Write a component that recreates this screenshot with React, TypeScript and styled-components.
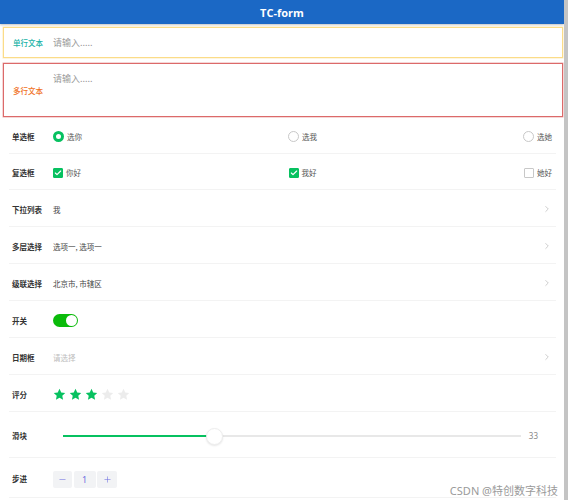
import React from 'react';
import styled, { createGlobalStyle } from 'styled-components';
import { ChevronRight, Check, Minus, Plus } from 'lucide-react';

const GlobalStyle = createGlobalStyle`
  html, body {
    margin: 0;
    padding: 0;
    background: #fff;
  }
  body {
    font-family: "Noto Sans", "Noto Sans CJK SC", sans-serif;
  }
`;

const GREEN = '#07c160';

// Page frame: content column plus the browser scrollbar strip on the right.
const Page = styled.div`
  position: relative;
  width: 564px;
  height: 500px;
  border-right: 4px solid #c4c4c4;
  overflow: hidden;
  background: #fff;
`;

const Header = styled.header`
  height: 24px;
  display: flex;
  align-items: center;
  justify-content: center;
  background: #1b68c5;
  box-shadow: 0 1px 2px rgba(0, 0, 0, 0.25);
  color: #fff;
  font-family: "Open Sans", "Noto Sans", sans-serif;
  font-weight: 700;
  font-size: 11px;
`;

const Fields = styled.div`
  display: flex;
  flex-direction: column;
  gap: 5px;
  padding: 3px 1px 0 3px;
`;

const FieldBox = styled.div<{ $border: string; $tall?: boolean }>`
  display: flex;
  align-items: ${({ $tall }) => ($tall ? 'stretch' : 'center')};
  height: ${({ $tall }) => ($tall ? '54px' : '31px')};
  box-sizing: border-box;
  border: 1px solid ${({ $border }) => $border};
  box-shadow: 0 0 0 0.5px ${({ $border }) => $border}88;
`;

const FieldLabel = styled.span<{ $color: string }>`
  width: 40px;
  padding-left: 9px;
  align-self: center;
  color: ${({ $color }) => $color};
  font-family: "Noto Sans CJK SC", sans-serif;
  font-size: 7.5px;
  font-weight: 500;
`;

const Placeholder = styled.span<{ $tall?: boolean }>`
  padding-top: ${({ $tall }) => ($tall ? '8px' : '0')};
  color: #9a9a9a;
  font-family: "Noto Sans CJK SC", sans-serif;
  font-size: 9px;
`;

const Rows = styled.div`
  display: flex;
  flex-direction: column;
  margin: 0 8px 0 9px;
`;

const Row = styled.div<{ $h: number }>`
  display: flex;
  align-items: center;
  height: ${({ $h }) => $h}px;
  box-sizing: border-box;
  padding-top: 2px;
  border-bottom: 1px solid #f3f3f3;
`;

const RowLabel = styled.span`
  width: 41px;
  padding-left: 3px;
  flex: 0 0 auto;
  color: #333;
  font-family: "Noto Sans CJK SC", sans-serif;
  font-size: 7.5px;
  font-weight: 600;
`;

const RowBody = styled.div`
  flex: 1;
  display: flex;
  align-items: center;
  justify-content: space-between;
  padding-right: 4px;
  min-width: 0;
`;

const Value = styled.span<{ $muted?: boolean }>`
  color: ${({ $muted }) => ($muted ? '#bdbdbd' : '#444')};
  font-family: "Noto Sans CJK SC", sans-serif;
  font-size: 7.5px;
`;

const Option = styled.span`
  display: flex;
  align-items: center;
  gap: 3px;
  color: #555;
  font-family: "Noto Sans CJK SC", sans-serif;
  font-size: 7.5px;
`;

const RadioDot = styled.span<{ $on?: boolean }>`
  width: 11px;
  height: 11px;
  box-sizing: border-box;
  border-radius: 50%;
  border: ${({ $on }) => ($on ? `3px solid ${GREEN}` : '1px solid #c8c8c8')};
  background: #fff;
`;

const CheckBox = styled.span<{ $on?: boolean }>`
  width: 10px;
  height: 10px;
  box-sizing: border-box;
  display: flex;
  align-items: center;
  justify-content: center;
  border: 1px solid ${({ $on }) => ($on ? GREEN : '#c8c8c8')};
  background: ${({ $on }) => ($on ? GREEN : '#fff')};
  border-radius: 1px;
`;

const Arrow = styled(ChevronRight)`
  color: #c4c4c4;
`;

const Toggle = styled.span<{ $on?: boolean }>`
  position: relative;
  width: 25px;
  height: 13px;
  border-radius: 7px;
  background: ${({ $on }) => ($on ? '#0abb0a' : '#e5e5e5')};
`;

const Knob = styled.span`
  position: absolute;
  top: 1px;
  right: 1px;
  width: 11px;
  height: 11px;
  border-radius: 50%;
  background: #fff;
`;

const Stars = styled.div`
  display: flex;
  gap: 3px;
`;

const SliderWrap = styled.div`
  flex: 1;
  display: flex;
  align-items: center;
  gap: 8px;
  padding-left: 10px;
  padding-right: 18px;
`;

const Track = styled.div`
  position: relative;
  flex: 1;
  height: 2px;
  background: #e8e8e8;
`;

const TrackFill = styled.div`
  position: absolute;
  left: 0;
  top: 0;
  height: 2px;
  background: ${GREEN};
`;

const Thumb = styled.span`
  position: absolute;
  top: 1px;
  width: 15px;
  height: 15px;
  margin: -8px 0 0 -8px;
  border-radius: 50%;
  background: #fff;
  border: 1px solid #eee;
  box-shadow: 0 1px 2px rgba(0, 0, 0, 0.1);
`;

const SliderValue = styled.span`
  color: #888;
  font-family: "Noto Sans", sans-serif;
  font-size: 8px;
`;

const Stepper = styled.div`
  display: flex;
  gap: 1.5px;
  height: 17px;
  margin-top: 2px;
`;

const StepCell = styled.span<{ $w: number }>`
  width: ${({ $w }) => $w}px;
  display: flex;
  align-items: center;
  justify-content: center;
  background: #f2f3f5;
  border-radius: 2px;
  color: #6f6fe0;
  font-family: "Noto Sans", sans-serif;
  font-size: 9px;
`;

const Watermark = styled.span`
  position: absolute;
  right: 6px;
  bottom: 2px;
  color: #9a9a9a;
  font-family: "Noto Sans", "Noto Sans CJK SC", sans-serif;
  font-size: 11px;
  text-shadow: 0 0 2px #fff;
`;

function StarIcon({ on }: { on: boolean }) {
  return (
    <svg width="13" height="13" viewBox="0 0 24 24">
      <path
        d="M12 1.5l3.2 6.9 7.4.8-5.5 5.1 1.5 7.4L12 17.9l-6.6 3.8 1.5-7.4-5.5-5.1 7.4-.8z"
        fill={on ? GREEN : '#ececec'}
      />
    </svg>
  );
}

function Radio({ on, label }: { on?: boolean; label: string }) {
  return (
    <Option>
      <RadioDot $on={on} />
      {label}
    </Option>
  );
}

function Checkbox({ on, label }: { on?: boolean; label: string }) {
  return (
    <Option>
      <CheckBox $on={on}>{on && <Check size={8} color="#fff" strokeWidth={3.5} />}</CheckBox>
      {label}
    </Option>
  );
}

export default function App() {
  const rating = 3;
  const slider = 33;
  return (
    <>
      <GlobalStyle />
      <Page>
        <Header>TC-form</Header>
        <Fields>
          <FieldBox $border="#fbdc88">
            <FieldLabel $color="#1bb3a6">单行文本</FieldLabel>
            <Placeholder>请输入.....</Placeholder>
          </FieldBox>
          <FieldBox $border="#dc6a6a" $tall>
            <FieldLabel $color="#f0731f">多行文本</FieldLabel>
            <Placeholder $tall>请输入.....</Placeholder>
          </FieldBox>
        </Fields>
        <Rows>
          <Row $h={37}>
            <RowLabel>单选框</RowLabel>
            <RowBody>
              <Radio on label="选你" />
              <Radio label="选我" />
              <Radio label="选她" />
            </RowBody>
          </Row>
          <Row $h={36}>
            <RowLabel>复选框</RowLabel>
            <RowBody>
              <Checkbox on label="你好" />
              <Checkbox on label="我好" />
              <Checkbox label="她好" />
            </RowBody>
          </Row>
          <Row $h={37}>
            <RowLabel>下拉列表</RowLabel>
            <RowBody>
              <Value>我</Value>
              <Arrow size={10} />
            </RowBody>
          </Row>
          <Row $h={37}>
            <RowLabel>多层选择</RowLabel>
            <RowBody>
              <Value>选项一, 选项一</Value>
              <Arrow size={10} />
            </RowBody>
          </Row>
          <Row $h={37}>
            <RowLabel>级联选择</RowLabel>
            <RowBody>
              <Value>北京市, 市辖区</Value>
              <Arrow size={10} />
            </RowBody>
          </Row>
          <Row $h={37}>
            <RowLabel>开关</RowLabel>
            <RowBody>
              <Toggle $on>
                <Knob />
              </Toggle>
            </RowBody>
          </Row>
          <Row $h={37}>
            <RowLabel>日期框</RowLabel>
            <RowBody>
              <Value $muted>请选择</Value>
              <Arrow size={10} />
            </RowBody>
          </Row>
          <Row $h={37}>
            <RowLabel>评分</RowLabel>
            <RowBody>
              <Stars>
                {[1, 2, 3, 4, 5].map((n) => (
                  <StarIcon key={n} on={n <= rating} />
                ))}
              </Stars>
            </RowBody>
          </Row>
          <Row $h={46}>
            <RowLabel>滑块</RowLabel>
            <SliderWrap>
              <Track>
                <TrackFill style={{ width: `${slider}%` }} />
                <Thumb style={{ left: `${slider}%` }} />
              </Track>
              <SliderValue>{slider}</SliderValue>
            </SliderWrap>
          </Row>
          <Row $h={40}>
            <RowLabel>步进</RowLabel>
            <Stepper>
              <StepCell $w={19}>
                <Minus size={9} strokeWidth={1.5} />
              </StepCell>
              <StepCell $w={22}>1</StepCell>
              <StepCell $w={20}>
                <Plus size={9} strokeWidth={1.5} />
              </StepCell>
            </Stepper>
          </Row>
        </Rows>
        <Watermark>CSDN @特创数字科技</Watermark>
      </Page>
    </>
  );
}
